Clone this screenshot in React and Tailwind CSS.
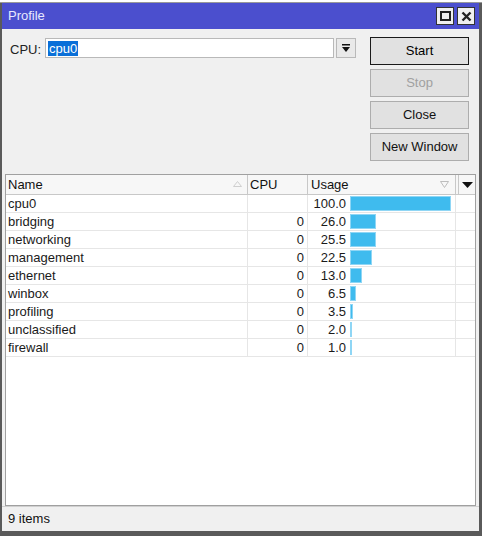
import React from "react";

const rows = [
  ["cpu0", "", "100.0", 101],
  ["bridging", "0", "26.0", 26],
  ["networking", "0", "25.5", 26],
  ["management", "0", "22.5", 22],
  ["ethernet", "0", "13.0", 12],
  ["winbox", "0", "6.5", 6],
  ["profiling", "0", "3.5", 3],
  ["unclassified", "0", "2.0", 2],
  ["firewall", "0", "1.0", 2],
];

function Btn({ children, focused, disabled }) {
  return (
    <div
      className={
        "h-[28px] w-[99px] flex items-center justify-center text-[13px] " +
        (focused
          ? "border border-[#1a1a1a] bg-[#e1e1e1] text-[#111]"
          : "border border-[#adadad] bg-[#e1e1e1] ") +
        (disabled ? "text-[#a0a0a0]" : "text-[#111]")
      }
    >
      {children}
    </div>
  );
}

export default function App() {
  return (
    <div
      className="w-[482px] h-[536px] bg-white overflow-hidden flex flex-col"
      style={{ fontFamily: '"Liberation Sans", Arial, sans-serif' }}
    >
      <div className="h-[3px] bg-white border-b border-[#999] shrink-0" />
      <div className="flex-1 flex flex-col border-l-2 border-r-[3px] border-b-[5px] border-[#5a5a5a] bg-[#f0f0f0] min-h-0">
        {/* Title bar */}
        <div className="h-[26px] shrink-0 bg-[#4b4fce] flex items-center pl-[6px] pr-[4px]">
          <span className="text-[13px] text-[#e8e8ff] flex-1">Profile</span>
          <div className="flex gap-[3px]">
            <div className="w-[18px] h-[18px] bg-[#f0f0f0] border border-[#333] flex items-center justify-center">
              <div className="w-[11px] h-[10px] border-2 border-[#222]" />
            </div>
            <div className="w-[18px] h-[18px] bg-[#f0f0f0] border border-[#333] flex items-center justify-center">
              <svg width="11" height="11" viewBox="0 0 11 11">
                <path d="M1.5 1.5 L9.5 9.5 M9.5 1.5 L1.5 9.5" stroke="#222" strokeWidth="2.4" />
              </svg>
            </div>
          </div>
        </div>

        {/* Top area */}
        <div className="flex shrink-0 h-[145px] pt-[8px]">
          <div className="flex items-start pl-[8px] pt-[1px]">
            <span className="text-[13px] text-[#222] mt-[2px] mr-[4px]">CPU:</span>
            <div className="w-[289px] h-[20px] bg-white border border-[#b9b9b9] flex items-center pl-[2px]">
              <span className="text-[13px] text-white bg-[#0a6fd8] leading-[15px] px-[1px]">cpu0</span>
            </div>
            <div className="ml-[2px] w-[20px] h-[20px] border border-[#b9b9b9] bg-[#e9e9e9] flex items-center justify-center">
              <svg width="10" height="10" viewBox="0 0 10 10">
                <rect x="1" y="1" width="8" height="1.5" fill="#111" />
                <path d="M1 4 L9 4 L5 9 Z" fill="#111" />
              </svg>
            </div>
          </div>
          <div className="ml-[14px] flex flex-col gap-[4px]">
            <Btn focused>Start</Btn>
            <Btn disabled>Stop</Btn>
            <Btn>Close</Btn>
            <Btn>New Window</Btn>
          </div>
        </div>

        {/* Table */}
        <div className="flex-1 min-h-0 mx-[3px] border border-[#a0a0a0] bg-white flex flex-col">
          <div className="h-[20px] shrink-0 flex border-b border-[#c8c8c8] bg-[#f7f7f7] text-[13px] text-[#111]">
            <div className="w-[242px] border-r border-[#c8c8c8] pl-[2px] flex items-center relative">
              Name
              <svg className="absolute right-[5px] top-[6px]" width="9" height="6" viewBox="0 0 9 6">
                <path d="M0.5 5.5 L4.5 0.5 L8.5 5.5 Z" fill="none" stroke="#cfcfcf" />
              </svg>
            </div>
            <div className="w-[60px] border-r border-[#c8c8c8] pl-[2px] flex items-center">CPU</div>
            <div className="w-[148px] border-r border-[#c8c8c8] pl-[3px] flex items-center relative">
              Usage
              <svg className="absolute right-[6px] top-[6px]" width="9" height="7" viewBox="0 0 9 7">
                <path d="M0.5 0.5 L8.5 0.5 L4.5 6.5 Z" fill="none" stroke="#bdbdbd" />
              </svg>
            </div>
            <div className="w-[3px] border-r border-[#c8c8c8]" />
            <div className="flex-1 flex items-center justify-center">
              <svg width="11" height="6" viewBox="0 0 11 6">
                <path d="M0 0 L11 0 L5.5 6 Z" fill="#111" />
              </svg>
            </div>
          </div>
          {rows.map(([name, cpu, usage, w]) => (
            <div key={name} className="h-[18px] shrink-0 flex border-b border-[#e6e6e6] text-[13px] text-[#1a1a1a]">
              <div className="w-[242px] border-r border-[#e6e6e6] pl-[2px] flex items-center">{name}</div>
              <div className="w-[60px] border-r border-[#e6e6e6] pr-[3px] flex items-center justify-end">{cpu}</div>
              <div className="w-[148px] border-r border-[#e6e6e6] flex items-center">
                <div className="w-[38px] text-right pr-[0px]">{usage}</div>
                <div className="ml-[4px] h-[16px] flex items-center">
                  <div className="h-[15px] bg-[#3fbbee] border border-[#8fd6f5]" style={{ width: w }} />
                </div>
              </div>
              <div className="flex-1" />
            </div>
          ))}
        </div>

        {/* Status */}
        <div className="h-[25px] shrink-0 flex items-center pl-[6px] text-[13px] text-[#111] border-t border-[#d0d0d0]">
          9 items
        </div>
      </div>
    </div>
  );
}
